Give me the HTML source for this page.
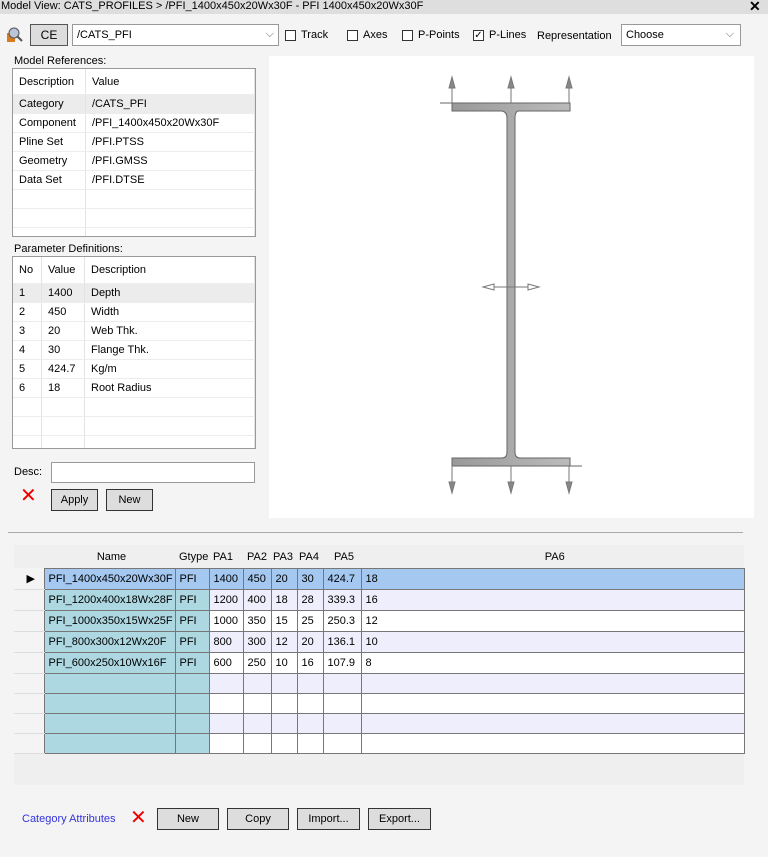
<!DOCTYPE html><html><head><style>
body{margin:0;width:768px;height:857px;background:#f4f4f4;font-family:"Liberation Sans",sans-serif;font-size:11px;color:#000;position:relative;overflow:hidden}
.a{position:absolute}
.btn{position:absolute;background:#dddddd;border:1px solid #333;box-sizing:border-box;text-align:center;font-size:11px}
.cb{position:absolute;width:11px;height:11px;border:1px solid #333;background:#fff;box-sizing:border-box}
table{border-collapse:collapse}
.ref td{height:18px;padding:0 0 0 6px;border-right:1px solid #e3e3e3;border-bottom:1px solid #ececec;font-size:11px}
.g td{border:1px solid #777;height:19px;padding:0 0 0 4px;font-size:11px;box-sizing:border-box}
</style></head><body>
<div class="a" style="left:0;top:0;width:768px;height:14px;background:#dedede"></div>
<div class="a" style="left:1px;top:0;font-size:11px;line-height:13px">Model View: CATS_PROFILES &gt; /PFI_1400x450x20Wx30F - PFI 1400x450x20Wx30F</div>
<div class="a" style="left:749px;top:-2px;font-size:14px;font-weight:bold">✕</div>
<svg class="a" style="left:6px;top:26px" width="18" height="18"><rect x="1" y="7" width="8" height="9" fill="#d87a20"/><circle cx="8" cy="7" r="5" fill="#b8c6d8" stroke="#555"/><line x1="11" y1="10" x2="16" y2="15" stroke="#555" stroke-width="2"/></svg>
<div class="btn" style="left:30px;top:24px;width:38px;height:22px;line-height:20px;font-size:12px;border-color:#555">CE</div>
<div class="a" style="left:72px;top:24px;width:207px;height:22px;background:#fff;border:1px solid #999;box-sizing:border-box;padding:4px 4px;font-size:11px">/CATS_PFI<span style="position:absolute;right:4px;top:3px;color:#666">⌵</span></div>
<div class="cb" style="left:285px;top:30px"></div><div class="a" style="left:301px;top:29px">Track</div>
<div class="cb" style="left:347px;top:30px"></div><div class="a" style="left:363px;top:29px">Axes</div>
<div class="cb" style="left:402px;top:30px"></div><div class="a" style="left:418px;top:29px">P-Points</div>
<div class="cb" style="left:473px;top:30px;font-size:10px;line-height:9px;text-align:center">✓</div><div class="a" style="left:489px;top:29px">P-Lines</div>
<div class="a" style="left:537px;top:30px">Representation</div>
<div class="a" style="left:621px;top:24px;width:120px;height:22px;background:#fff;border:1px solid #999;box-sizing:border-box;padding:4px 4px">Choose<span style="position:absolute;right:6px;top:3px;color:#666">⌵</span></div>

<div class="a" style="left:14px;top:55px">Model References:</div>
<div class="a" style="left:12px;top:68px;width:244px;height:169px;background:#fff;border:1px solid #999;box-sizing:border-box;overflow:hidden">
<table class="ref" style="width:242px"><tr><td style="width:66px;height:25px">Description</td><td>Value</td></tr>
<tr style="background:#ececec"><td>Category</td><td>/CATS_PFI</td></tr>
<tr><td>Component</td><td>/PFI_1400x450x20Wx30F</td></tr>
<tr><td>Pline Set</td><td>/PFI.PTSS</td></tr>
<tr><td>Geometry</td><td>/PFI.GMSS</td></tr>
<tr><td>Data Set</td><td>/PFI.DTSE</td></tr>
<tr><td></td><td></td></tr><tr><td></td><td></td></tr><tr><td style="border-bottom:0"></td><td style="border-bottom:0"></td></tr></table></div>

<div class="a" style="left:14px;top:243px">Parameter Definitions:</div>
<div class="a" style="left:12px;top:256px;width:244px;height:193px;background:#fff;border:1px solid #999;box-sizing:border-box;overflow:hidden">
<table class="ref" style="width:242px"><tr><td style="width:22px;height:26px">No</td><td style="width:36px">Value</td><td>Description</td></tr>
<tr style="background:#ececec"><td>1</td><td>1400</td><td>Depth</td></tr>
<tr><td>2</td><td>450</td><td>Width</td></tr>
<tr><td>3</td><td>20</td><td>Web Thk.</td></tr>
<tr><td>4</td><td>30</td><td>Flange Thk.</td></tr>
<tr><td>5</td><td>424.7</td><td>Kg/m</td></tr>
<tr><td>6</td><td>18</td><td>Root Radius</td></tr>
<tr><td></td><td></td><td></td></tr><tr><td></td><td></td><td></td></tr><tr><td></td><td></td><td></td></tr></table></div>

<div class="a" style="left:14px;top:466px">Desc:</div>
<div class="a" style="left:51px;top:462px;width:204px;height:21px;background:#fff;border:1px solid #999;box-sizing:border-box"></div>
<div class="a" style="left:20px;top:486px;color:#e00;font-size:20px;line-height:20px">✕</div>
<div class="btn" style="left:51px;top:489px;width:47px;height:22px;line-height:20px">Apply</div>
<div class="btn" style="left:106px;top:489px;width:47px;height:22px;line-height:20px">New</div>

<div class="a" style="left:269px;top:56px;width:485px;height:462px;background:#fff"></div>
<svg class="a" style="left:269px;top:56px" width="485" height="462">
<defs><linearGradient id="gf" x1="0" x2="1"><stop offset="0" stop-color="#999"/><stop offset="1" stop-color="#bbb"/></linearGradient></defs>
<g transform="translate(-269,-56)">
<path d="M452 103H570V111H518Q515 112 515 118V452Q515 458 520 458H570V466H452V458H502Q507 458 507 452V118Q507 112 502 111H452Z" fill="url(#gf)" stroke="#666"/>
<line x1="440" y1="103" x2="452" y2="103" stroke="#666"/><line x1="570" y1="466" x2="582" y2="466" stroke="#666"/>
<g stroke="#777" fill="#888"><line x1="452" y1="80" x2="452" y2="103"/><line x1="511" y1="80" x2="511" y2="103"/><line x1="569" y1="80" x2="569" y2="103"/>
<path d="M449 88L452 77L455 88Z"/><path d="M508 88L511 77L514 88Z"/><path d="M566 88L569 77L572 88Z"/>
<line x1="452" y1="466" x2="452" y2="490"/><line x1="511" y1="466" x2="511" y2="490"/><line x1="569" y1="466" x2="569" y2="490"/>
<path d="M449 482L452 493L455 482Z"/><path d="M508 482L511 493L514 482Z"/><path d="M566 482L569 493L572 482Z"/>
<line x1="484" y1="287" x2="538" y2="287"/><path d="M494 284L483 287L494 290Z" fill="#fff"/><path d="M528 284L539 287L528 290Z" fill="#fff"/></g>
</g></svg>

<div class="a" style="left:8px;top:532px;width:735px;height:1px;background:#aaa"></div>
<div class="a" style="left:14px;top:545px;width:730px;height:240px;background:#efefef"></div>
<table class="g a" style="left:14px;top:547px;table-layout:fixed;width:731px">
<colgroup><col style="width:30px"><col style="width:131px"><col style="width:34px"><col style="width:34px"><col style="width:28px"><col style="width:26px"><col style="width:26px"><col style="width:38px"><col></colgroup>
<tr style="height:21px"><td style="border:0"></td><td style="border:0;text-align:center">Name</td><td style="border:0">Gtype</td><td style="border:0">PA1</td><td style="border:0">PA2</td><td style="border:0;padding:0 2px">PA3</td><td style="border:0;padding:0 2px">PA4</td><td style="border:0;text-align:center">PA5</td><td style="border:0;text-align:center">PA6</td></tr>
<tr style="background:#a4c8f0;height:21px"><td style="background:#f4f4f4;border:0;border-bottom:1px solid #ddd;text-align:center">▶</td><td>PFI_1400x450x20Wx30F</td><td>PFI</td><td>1400</td><td>450</td><td>20</td><td>30</td><td>424.7</td><td>18</td></tr>
<tr style="background:#eeeefc;height:21px"><td style="background:#f4f4f4;border:0;border-bottom:1px solid #ddd"></td><td style="background:#add8e2">PFI_1200x400x18Wx28F</td><td style="background:#add8e2">PFI</td><td>1200</td><td>400</td><td>18</td><td>28</td><td>339.3</td><td>16</td></tr>
<tr style="background:#fff;height:21px"><td style="background:#f4f4f4;border:0;border-bottom:1px solid #ddd"></td><td style="background:#add8e2">PFI_1000x350x15Wx25F</td><td style="background:#add8e2">PFI</td><td>1000</td><td>350</td><td>15</td><td>25</td><td>250.3</td><td>12</td></tr>
<tr style="background:#eeeefc;height:21px"><td style="background:#f4f4f4;border:0;border-bottom:1px solid #ddd"></td><td style="background:#add8e2">PFI_800x300x12Wx20F</td><td style="background:#add8e2">PFI</td><td>800</td><td>300</td><td>12</td><td>20</td><td>136.1</td><td>10</td></tr>
<tr style="background:#fff;height:21px"><td style="background:#f4f4f4;border:0;border-bottom:1px solid #ddd"></td><td style="background:#add8e2">PFI_600x250x10Wx16F</td><td style="background:#add8e2">PFI</td><td>600</td><td>250</td><td>10</td><td>16</td><td>107.9</td><td>8</td></tr>
<tr style="background:#eeeefc;height:20px"><td style="background:#f4f4f4;border:0;border-bottom:1px solid #ddd"></td><td style="background:#add8e2"></td><td style="background:#add8e2"></td><td></td><td></td><td></td><td></td><td></td><td></td></tr>
<tr style="background:#fff;height:20px"><td style="background:#f4f4f4;border:0;border-bottom:1px solid #ddd"></td><td style="background:#add8e2"></td><td style="background:#add8e2"></td><td></td><td></td><td></td><td></td><td></td><td></td></tr>
<tr style="background:#eeeefc;height:20px"><td style="background:#f4f4f4;border:0;border-bottom:1px solid #ddd"></td><td style="background:#add8e2"></td><td style="background:#add8e2"></td><td></td><td></td><td></td><td></td><td></td><td></td></tr>
<tr style="background:#fff;height:20px"><td style="background:#f4f4f4;border:0;border-bottom:1px solid #ddd"></td><td style="background:#add8e2"></td><td style="background:#add8e2"></td><td></td><td></td><td></td><td></td><td></td><td></td></tr>
</table>

<div class="a" style="left:22px;top:813px;color:#3333dd">Category Attributes</div>
<div class="a" style="left:130px;top:808px;color:#e00;font-size:20px;line-height:20px">✕</div>
<div class="btn" style="left:157px;top:808px;width:62px;height:22px;line-height:20px">New</div>
<div class="btn" style="left:227px;top:808px;width:62px;height:22px;line-height:20px">Copy</div>
<div class="btn" style="left:297px;top:808px;width:63px;height:22px;line-height:20px">Import...</div>
<div class="btn" style="left:368px;top:808px;width:63px;height:22px;line-height:20px">Export...</div>
</body></html>
